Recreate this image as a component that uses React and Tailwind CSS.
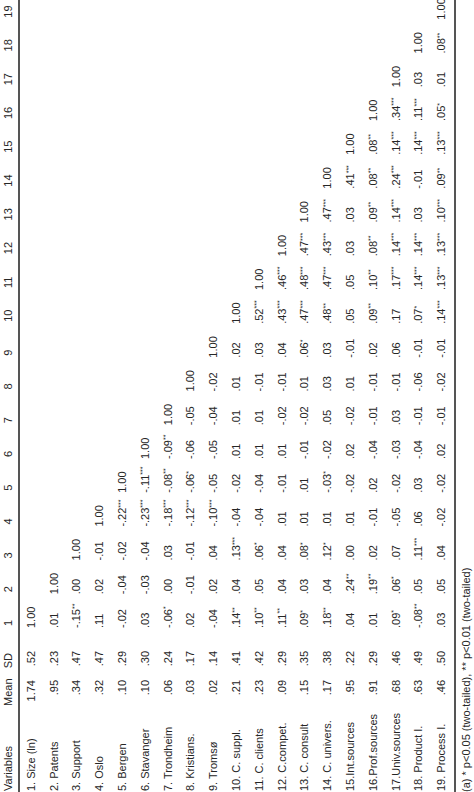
import React from 'react'

// Correlation table, printed sideways (rotated -90deg) like the scanned page
const rows = [
  ['1. Size (ln)', '1.74', '.52', ['1.00']],
  ['2. Patents', '.95', '.23', ['.01', '1.00']],
  ['3. Support', '.34', '.47', ['-.15**', '.00', '1.00']],
  ['4. Oslo', '.32', '.47', ['.11', '.02', '-.01', '1.00']],
  ['5. Bergen', '.10', '.29', ['-.02', '-.04', '-.02', '-.22***', '1.00']],
  ['6. Stavanger', '.10', '.30', ['.03', '-.03', '-.04', '-.23***', '-.11***', '1.00']],
  ['7. Trondheim', '.06', '.24', ['-.06*', '.00', '.03', '-.18***', '-.08**', '-.09**', '1.00']],
  ['8. Kristians.', '.03', '.17', ['.02', '-.01', '-.01', '-.12***', '-.06*', '-.06', '-.05', '1.00']],
  ['9. Tromsø', '.02', '.14', ['-.04', '.02', '.04', '-.10***', '-.05', '-.05', '-.04', '-.02', '1.00']],
  ['10. C. suppl.', '.21', '.41', ['.14**', '.04', '.13***', '-.04', '-.02', '.01', '.01', '.01', '.02', '1.00']],
  ['11. C. clients', '.23', '.42', ['.10**', '.05', '.06*', '-.04', '-.04', '.01', '.01', '-.01', '.03', '.52***', '1.00']],
  ['12. C.compet.', '.09', '.29', ['.11**', '.04', '.04', '.01', '-.01', '.01', '-.02', '-.01', '.04', '.43***', '.46***', '1.00']],
  ['13. C. consult', '.15', '.35', ['.09*', '.03', '.08*', '.01', '.01', '-.01', '-.02', '.01', '.06*', '.47***', '.48***', '.47***', '1.00']],
  ['14. C. univers.', '.17', '.38', ['.18**', '.04', '.12*', '.01', '-.03*', '-.02', '.05', '.03', '.03', '.48**', '.47***', '.43***', '.47***', '1.00']],
  ['15.Int.sources', '.95', '.22', ['.04', '.24**', '.00', '.01', '-.02', '.02', '-.02', '.01', '-.01', '.05', '.05', '.03', '.03', '.41***', '1.00']],
  ['16.Prof.sources', '.91', '.29', ['.01', '.19**', '.02', '-.01', '.02', '-.04', '-.01', '-.01', '.02', '.09**', '.10**', '.08**', '.09**', '.08**', '.08**', '1.00']],
  ['17.Univ.sources', '.68', '.46', ['.09*', '.06*', '.07', '-.05', '-.02', '-.03', '.03', '-.01', '.06', '.17', '.17***', '.14***', '.14***', '.24***', '.14***', '.34***', '1.00']],
  ['18. Product I.', '.63', '.49', ['-.08**', '.05', '.11***', '.06', '.03', '-.04', '-.01', '-.06', '-.01', '.07*', '.14***', '.14***', '.03', '-.01', '.14***', '.11***', '.03', '1.00']],
  ['19. Process I.', '.46', '.50', ['.03', '.05', '.04', '-.02', '-.02', '.02', '-.01', '-.02', '-.01', '.14***', '.13***', '.13***', '.10***', '.09**', '.13***', '.05*', '.01', '.08**', '1.00']],
]

const grid = 'grid grid-cols-[86px_26px_29px_23px_repeat(18,33.8px)_20px] items-center'

function Val({ v }) {
  const i = v.indexOf('*')
  if (i < 0) return <span>{v}</span>
  return (
    <span>
      {v.slice(0, i)}
      <sup className="text-[7px]">{v.slice(i)}</sup>
    </span>
  )
}

export default function App() {
  return (
    <div className="w-[474px] h-[792px] overflow-hidden bg-white">
      <div
        className="w-[792px] h-[474px] origin-top-left [transform:translateY(792px)_rotate(-90deg)] text-[11px] leading-none text-[#262626] whitespace-nowrap"
        style={{ fontFamily: '"Liberation Sans", Arial, sans-serif' }}
      >
        <div className={`${grid} h-[20px] pb-[2px] border-b-2 border-[#555]`}>
          <div className="pl-[1px]">Variables</div>
          <div className="text-right">Mean</div>
          <div className="text-right pr-[2px]">SD</div>
          <div />
          {Array.from({ length: 19 }, (_, i) => (
            <div key={i} className="pl-[2px]">{i + 1}</div>
          ))}
        </div>

        {rows.map(([name, mean, sd, vals]) => (
          <div key={name} className={`${grid} h-[22.8px]`}>
            <div className="pl-[1px]">{name}</div>
            <div className="text-right">{mean}</div>
            <div className="text-right">{sd}</div>
            <div />
            {vals.map((v, i) => (
              <div key={i}>
                <Val v={v} />
              </div>
            ))}
          </div>
        ))}

        <div className="mt-[1px] border-t-2 border-[#555] h-[22px] flex items-center">
          (a) * p&lt;0.05 (two-tailed), ** p&lt;0.01 (two-tailed)
        </div>
      </div>
    </div>
  )
}
